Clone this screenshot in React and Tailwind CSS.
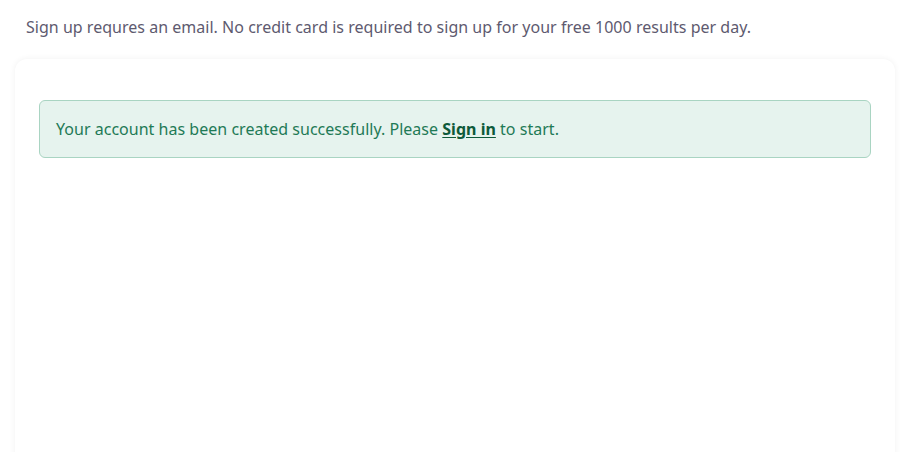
export default function App() {
  return (
    <div
      className="h-screen overflow-hidden bg-white text-base leading-6 tracking-[0.02px]"
      style={{ fontFamily: '"Noto Sans", "Open Sans", sans-serif' }}
    >
      <p className="px-[26px] pt-[15px] text-[#5e5a6f]">
        Sign up requres an email. No credit card is required to sign up for your free 1000 results per day.
      </p>
      <div className="mt-[20px] ml-[15px] mr-[19px] h-[420px] rounded-xl bg-white px-6 pt-[41px] shadow-[0_0_6px_rgba(0,0,0,0.06)]">
        <div className="rounded-md border border-[#a9d4c2] bg-[#e6f3ee] px-4 py-4 text-[#1f7a56]">
          Your account has been created successfully. Please{" "}
          <a href="#" className="font-bold text-[#0e5a3a] underline underline-offset-2">
            Sign in
          </a>{" "}
          to start.
        </div>
      </div>
    </div>
  )
}
